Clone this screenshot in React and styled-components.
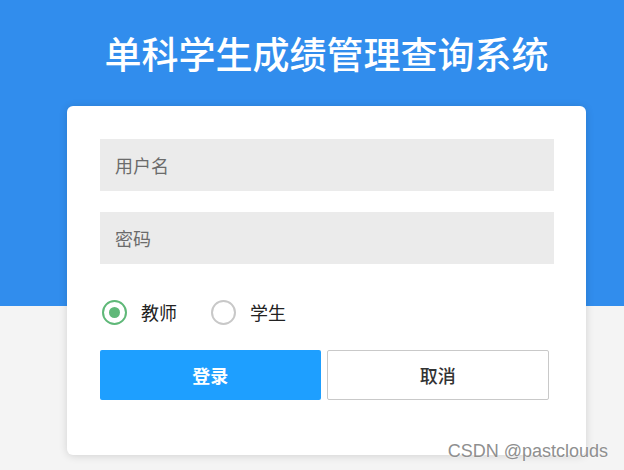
import React, { useState } from "react";
import styled, { createGlobalStyle } from "styled-components";

const Global = createGlobalStyle`
  html, body { margin: 0; padding: 0; }
  body {
    font-family: "Noto Sans CJK SC", "Noto Sans", sans-serif;
    background: #f4f4f4;
  }
`;

const Page = styled.div`
  position: relative;
  min-height: 100vh;
  background: linear-gradient(#318ded 0, #318ded 306px, #f4f4f4 306px);
  overflow: hidden;
`;

const Column = styled.div`
  width: 519px;
  margin-left: 67px;
  display: flex;
  flex-direction: column;
`;

const Title = styled.h1`
  margin: 0;
  height: 106px;
  display: flex;
  align-items: center;
  justify-content: center;
  color: #fff;
  font-size: 37px;
  font-weight: 500;
  padding-bottom: 1px;
  box-sizing: border-box;
`;

const Card = styled.div`
  background: #fff;
  border-radius: 6px;
  box-shadow: 0 1px 8px rgba(0, 0, 0, 0.14);
  height: 349px;
  box-sizing: border-box;
  padding: 33px 32px 0 33px;
  display: flex;
  flex-direction: column;
`;

const Input = styled.input`
  display: block;
  width: 100%;
  height: 52px;
  box-sizing: border-box;
  border: none;
  outline: none;
  background: #ebebeb;
  padding: 0 15px;
  font-family: "Noto Sans CJK SC", sans-serif;
  font-size: 18px;
  color: #333;
  margin-top: ${(p) => p.$gap || 0}px;
  &::placeholder { color: #6b6b6b; }
`;

const RadioRow = styled.div`
  margin-top: 34px;
  height: 28px;
  display: flex;
  align-items: center;
  padding-left: 2px;
`;

const RadioItem = styled.label`
  display: flex;
  align-items: center;
  margin-right: 34px;
  cursor: pointer;
  font-size: 18px;
  color: #222;
`;

const Circle = styled.span`
  width: 25px;
  height: 25px;
  box-sizing: border-box;
  border-radius: 50%;
  border: 2px solid ${(p) => (p.$on ? "#5fb878" : "#c8c8c8")};
  display: flex;
  align-items: center;
  justify-content: center;
  margin-right: 14px;
  &::after {
    content: "";
    width: 11px;
    height: 11px;
    border-radius: 50%;
    background: #5fb878;
    display: ${(p) => (p.$on ? "block" : "none")};
  }
`;

const Buttons = styled.div`
  margin-top: 24px;
  display: flex;
  gap: 6px;
  width: 449px;
`;

const Button = styled.button`
  flex: 1;
  height: 50px;
  border-radius: 2px;
  font-family: "Noto Sans CJK SC", sans-serif;
  font-size: 18px;
  cursor: pointer;
  ${(p) =>
    p.$primary
      ? `background:#1e9fff;border:none;color:#fff;font-weight:700;`
      : `background:#fff;border:1px solid #c9c9c9;color:#333;font-weight:500;`}
`;

const Watermark = styled.div`
  position: absolute;
  right: 16px;
  top: 441px;
  font-family: "Liberation Sans", Arial, sans-serif;
  font-size: 18px;
  line-height: 20px;
  color: #8f8f8f;
  text-shadow: 0 0 2px #fff;
`;

export default function App() {
  const [role, setRole] = useState("teacher");
  return (
    <>
      <Global />
      <Page>
        <Column>
          <Title>单科学生成绩管理查询系统</Title>
          <Card>
            <Input placeholder="用户名" />
            <Input type="password" placeholder="密码" $gap={21} />
            <RadioRow>
              <RadioItem onClick={() => setRole("teacher")}>
                <Circle $on={role === "teacher"} />
                教师
              </RadioItem>
              <RadioItem onClick={() => setRole("student")}>
                <Circle $on={role === "student"} />
                学生
              </RadioItem>
            </RadioRow>
            <Buttons>
              <Button $primary>登录</Button>
              <Button>取消</Button>
            </Buttons>
          </Card>
        </Column>
        <Watermark>CSDN @pastclouds</Watermark>
      </Page>
    </>
  );
}
